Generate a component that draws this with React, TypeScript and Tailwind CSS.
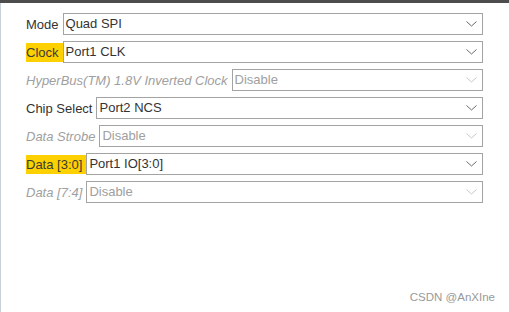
import React from 'react';

interface Row {
  label: string;
  value: string;
  kind: 'normal' | 'highlight' | 'disabled';
}

const rows: Row[] = [
  { label: 'Mode', value: 'Quad SPI', kind: 'normal' },
  { label: 'Clock', value: 'Port1 CLK', kind: 'highlight' },
  { label: 'HyperBus(TM) 1.8V Inverted Clock', value: 'Disable', kind: 'disabled' },
  { label: 'Chip Select', value: 'Port2 NCS', kind: 'normal' },
  { label: 'Data Strobe', value: 'Disable', kind: 'disabled' },
  { label: 'Data [3:0]', value: 'Port1 IO[3:0]', kind: 'highlight' },
  { label: 'Data [7:4]', value: 'Disable', kind: 'disabled' },
];

const Chevron: React.FC<{ disabled: boolean }> = ({ disabled }) => (
  <svg width="11" height="6" viewBox="0 0 11 6" className="shrink-0">
    <polyline
      points="0.5,0.5 5.5,5 10.5,0.5"
      fill="none"
      stroke={disabled ? '#c8c8c8' : '#6a6a6a'}
      strokeWidth="1"
    />
  </svg>
);

const FieldRow: React.FC<{ row: Row }> = ({ row }) => {
  const disabled = row.kind === 'disabled';
  const labelClass =
    row.kind === 'highlight'
      ? 'bg-[#fdd000] text-[#3a3a3a] h-[19px] pr-[4px]'
      : disabled
        ? 'italic text-[#a0a0a0] pr-[4px]'
        : 'text-[#333333] pr-[4px]';

  return (
    <div className="flex items-center h-[22px]">
      <span className={`whitespace-nowrap leading-[19px] ${labelClass}`}>{row.label}</span>
      <div className="flex-1 h-[22px] flex items-center justify-between border border-[#a3a3a3] bg-white pl-[2px] pr-[5px]">
        <span className={disabled ? 'text-[#a0a0a0]' : 'text-[#333333]'}>{row.value}</span>
        <Chevron disabled={disabled} />
      </div>
    </div>
  );
};

export default function App() {
  return (
    <div
      className="w-[509px] h-[312px] bg-white flex flex-col text-[13px] overflow-hidden"
      style={{ fontFamily: '"Liberation Sans", Arial, sans-serif' }}
    >
      <div className="h-[3px] bg-[#4d4d4d] shrink-0" />
      <div className="flex-1 flex flex-col border-l border-[#c9d1d8]">
        <div className="flex flex-col gap-[6px] pt-[10px] pl-[25px] pr-[26px]">
          {rows.map(r => (
            <FieldRow key={r.label} row={r} />
          ))}
        </div>
        <div className="mt-auto flex justify-end pr-[14px] pb-[6px] text-[11.5px] text-[#999999]">
          CSDN @AnXIne
        </div>
      </div>
    </div>
  );
}
